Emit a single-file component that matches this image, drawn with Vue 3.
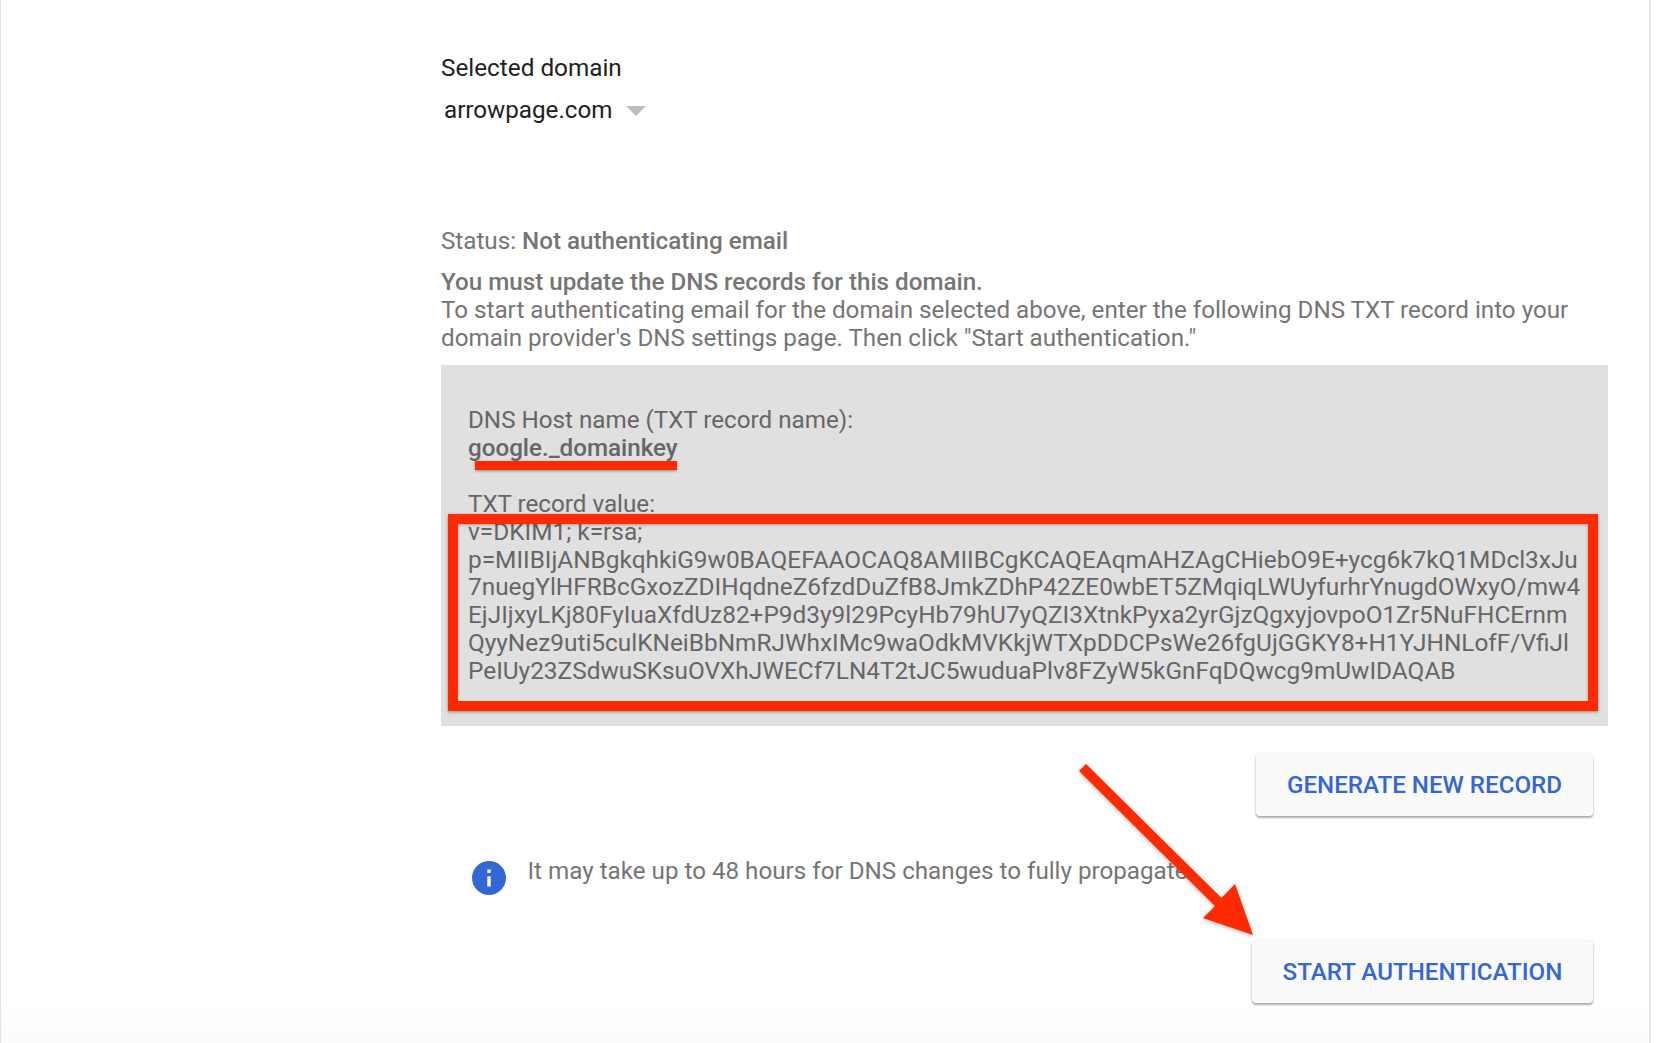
<script setup>
const recordLines = [
  'v=DKIM1; k=rsa;',
  'p=MIIBIjANBgkqhkiG9w0BAQEFAAOCAQ8AMIIBCgKCAQEAqmAHZAgCHiebO9E+ycg6k7kQ1MDcl3xJu',
  '7nuegYlHFRBcGxozZDIHqdneZ6fzdDuZfB8JmkZDhP42ZE0wbET5ZMqiqLWUyfurhrYnugdOWxyO/mw4',
  'EjJIjxyLKj80FyIuaXfdUz82+P9d3y9l29PcyHb79hU7yQZI3XtnkPyxa2yrGjzQgxyjovpoO1Zr5NuFHCErnm',
  'QyyNez9uti5culKNeiBbNmRJWhxIMc9waOdkMVKkjWTXpDDCPsWe26fgUjGGKY8+H1YJHNLofF/VfiJl',
  'PeIUy23ZSdwuSKsuOVXhJWECf7LN4T2tJC5wuduaPlv8FZyW5kGnFqDQwcg9mUwIDAQAB'
]
</script>

<template>
  <div class="page">
    <main class="panel">
      <div class="label">Selected domain</div>
      <div class="select">
        <span>arrowpage.com</span>
        <span class="caret"></span>
      </div>

      <p class="status">Status: <b>Not authenticating email</b></p>
      <p class="intro">
        <b>You must update the DNS records for this domain.</b><br />
        To start authenticating email for the domain selected above, enter the following DNS TXT record into your<br />
        domain provider's DNS settings page. Then click "Start authentication."
      </p>

      <section class="record">
        <div>DNS Host name (TXT record name):</div>
        <div class="host">
          <b>google._domainkey</b>
          <span class="underline"></span>
        </div>
        <div class="value-label">TXT record value:</div>
        <div class="value">
          <span class="highlight"></span>
          <div v-for="line in recordLines" :key="line" class="value-line">{{ line }}</div>
        </div>
      </section>

      <div class="actions first">
        <button class="btn generate">GENERATE NEW RECORD</button>
      </div>

      <div class="notice">
        <svg class="info" viewBox="2 2 20 20" aria-hidden="true">
          <circle cx="12" cy="12" r="10" fill="#3367d6" />
          <rect x="11" y="11" width="2" height="6" fill="#fff" />
          <rect x="11" y="7" width="2" height="2" fill="#fff" />
        </svg>
        <span>It may take up to 48 hours for DNS changes to fully propagate.</span>
      </div>

      <div class="actions">
        <button class="btn start">START AUTHENTICATION</button>
      </div>
    </main>

    <svg class="arrow" viewBox="0 0 200 190" aria-hidden="true">
      <polygon points="9,16 16,9 151.5,143 165,129 183,180 133,163 145,151" fill="#ff2a00" />
    </svg>
  </div>
</template>

<style scoped>
.page {
  position: relative;
  box-sizing: border-box;
  width: 1651px;
  height: 1043px;
  overflow: hidden;
  padding-left: 440px;
  border-left: 1px solid #e4e4e4;
  border-right: 2px solid #e9e9e9;
  background: linear-gradient(to bottom, #fff 0, #fff 1005px, #fbfbfb 1043px);
  color: #757575;
  font: 400 24.2px/28px Roboto, "Liberation Sans", sans-serif;
}
.panel {
  display: flex;
  flex-direction: column;
  width: 1167px;
  padding-top: 54px;
}
.label {
  color: #212121;
  font-size: 24.3px;
}
.select {
  display: flex;
  align-items: center;
  gap: 14px;
  margin-top: 14px;
  padding-left: 3px;
  color: #212121;
}
.caret {
  width: 0;
  height: 0;
  margin-top: 2px;
  border-left: 10px solid transparent;
  border-right: 10px solid transparent;
  border-top: 10px solid #bdbdbd;
}
p {
  margin: 0;
}
b {
  font-weight: 500;
}
.status {
  margin-top: 103px;
}
.intro {
  margin-top: 13px;
}
.record {
  margin-top: 13px;
  padding: 41px 27px 41.8px;
  background: #e0e0e0;
  color: #666;
}
.host {
  position: relative;
}
.underline {
  position: absolute;
  left: 7px;
  top: 27px;
  width: 202px;
  height: 9px;
  background: #ff2a00;
  box-shadow: 0 1px 3px rgba(0, 0, 0, 0.4);
}
.value-label {
  margin-top: 27.5px;
}
.value {
  position: relative;
  margin-top: 0.5px;
  white-space: nowrap;
  font-size: 24.4px;
  line-height: 27.7px;
}
.highlight {
  position: absolute;
  left: -20px;
  top: -4.5px;
  width: 1130px;
  height: 177px;
  border: 10px solid #ff2a00;
  box-shadow: 0 1px 3px rgba(0, 0, 0, 0.4), inset 0 1px 3px rgba(0, 0, 0, 0.3);
}
.actions {
  display: flex;
  justify-content: flex-end;
  padding-right: 15px;
  margin-top: 46px;
}
.actions.first {
  margin-top: 28px;
}
.btn {
  height: 62px;
  padding: 0;
  border: 0;
  border-radius: 4px;
  background: #fafafa;
  color: #3367d6;
  font: 500 24.15px/28px Roboto, "Liberation Sans", sans-serif;
  box-shadow: 0 2px 2px rgba(0, 0, 0, 0.3), 0 0 3px rgba(0, 0, 0, 0.12);
}
.generate {
  width: 337px;
}
.start {
  width: 341px;
}
.notice {
  display: flex;
  align-items: flex-start;
  gap: 21.5px;
  height: 38px;
  margin-top: 41px;
  padding-left: 31px;
}
.info {
  flex: none;
  width: 34px;
  height: 34px;
  margin-top: 4px;
}
.arrow {
  position: absolute;
  left: 1069px;
  top: 755px;
  width: 200px;
  height: 190px;
  filter: drop-shadow(0 1px 2px rgba(0, 0, 0, 0.3));
}
</style>
